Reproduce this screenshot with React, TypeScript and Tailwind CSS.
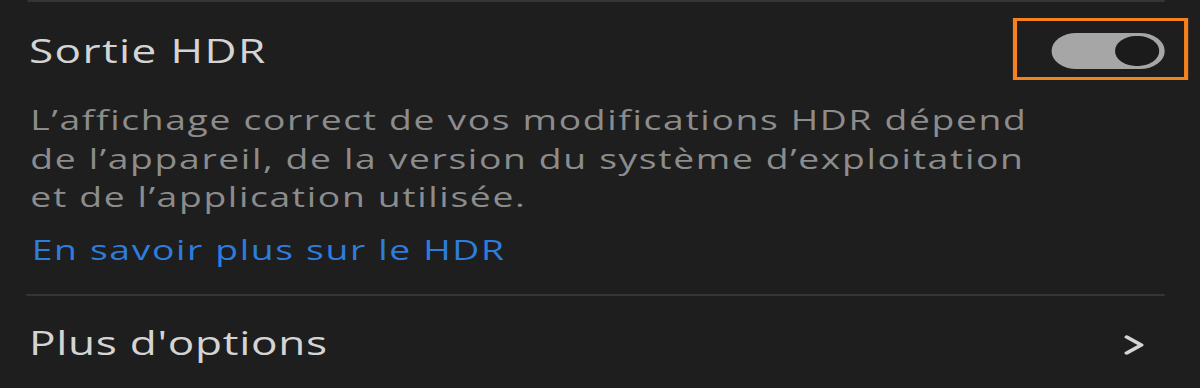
export default function App() {
  return (
    <div className="w-[1200px] h-[388px] overflow-hidden bg-[#1e1e1e]">
      {/* the whole screen is stretched horizontally in the capture */}
      <div
        className="w-[870px] h-[388px] origin-top-left scale-x-[1.38] bg-[#1e1e1e] flex flex-col"
        style={{ fontFamily: '"Open Sans", "Noto Sans", sans-serif' }}
      >
        <div className="h-[2px] ml-[20px] mr-[26px] bg-[#353535]" />

        {/* HDR output row */}
        <div className="mt-[29px] ml-[21px] mr-[26px] flex items-center justify-between">
          <span className="text-[32px] leading-[40px] tracking-[1px] text-[#d4d4d4]">Sortie HDR</span>
          <div className="relative">
            <div className="w-[82px] h-[36px] rounded-full bg-[#a6a6a6] flex items-center justify-end pr-[4px]">
              <div className="w-[32px] h-[30px] rounded-full bg-[#1b1b1b]" />
            </div>
            <div className="absolute left-[-28px] right-[-17px] top-[-15px] bottom-[-11px] border-[3px] border-[#f5821f]" />
          </div>
        </div>

        <p className="mt-[30px] ml-[22px] text-[27px] leading-[38.5px] tracking-[1.2px] text-[#8c8c8c]">
          L’affichage correct de vos modifications HDR dépend
          <br />
          de l’appareil, de la version du système d’exploitation
          <br />
          et de l’application utilisée.
        </p>

        <a className="mt-[14px] ml-[23px] text-[27px] leading-[38.5px] tracking-[1.2px] text-[#2d7ddf]">
          En savoir plus sur le HDR
        </a>

        <div className="mt-[25px] h-[2px] ml-[19px] mr-[26px] bg-[#353535]" />

        {/* more options row */}
        <div className="mt-[27px] ml-[21px] mr-[40px] flex items-center justify-between">
          <span className="text-[32px] leading-[40px] tracking-[0.5px] text-[#d4d4d4]">Plus d'options</span>
          <svg width="16" height="22" viewBox="0 0 16 22" className="mt-[4px]">
            <polyline
              points="2.5,3 13,11 2.5,19"
              fill="none"
              stroke="#d4d4d4"
              strokeWidth="3.4"
              strokeLinejoin="round"
              strokeLinecap="round"
            />
          </svg>
        </div>
      </div>
    </div>
  );
}
